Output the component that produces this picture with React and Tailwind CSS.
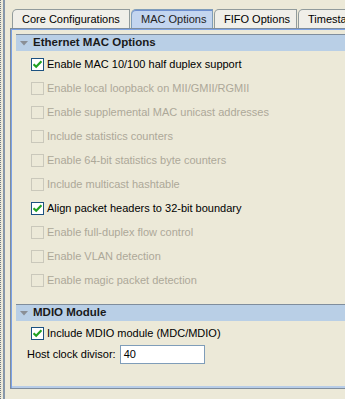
const font = { fontFamily: '"Liberation Sans", Arial, sans-serif' }

const macOptions = [
  { label: 'Enable MAC 10/100 half duplex support', checked: true },
  { label: 'Enable local loopback on MII/GMII/RGMII', disabled: true },
  { label: 'Enable supplemental MAC unicast addresses', disabled: true },
  { label: 'Include statistics counters', disabled: true },
  { label: 'Enable 64-bit statistics byte counters', disabled: true },
  { label: 'Include multicast hashtable', disabled: true },
  { label: 'Align packet headers to 32-bit boundary', checked: true },
  { label: 'Enable full-duplex flow control', disabled: true },
  { label: 'Enable VLAN detection', disabled: true },
  { label: 'Enable magic packet detection', disabled: true },
]

function Check({ checked, disabled }) {
  return (
    <span className={`w-[13px] h-[13px] shrink-0 border flex items-center justify-center ${disabled ? 'border-[#cac8bb] bg-[#ece9d8]' : 'border-[#1c5180] bg-white'}`}>
      {checked && (
        <svg width="9" height="9" viewBox="0 0 9 9">
          <path d="M0.5 4.2 L3.2 6.8 L8.5 1.3" fill="none" stroke="#21a121" strokeWidth="2.2" />
        </svg>
      )}
    </span>
  )
}

function Row({ label, checked, disabled }) {
  return (
    <div className="h-[24px] flex items-center gap-[3px] pl-[20px]">
      <Check checked={checked} disabled={disabled} />
      <span className={`text-[11px] leading-none ${disabled ? 'text-[#aca899]' : 'text-black'}`}>{label}</span>
    </div>
  )
}

function Header({ title }) {
  return (
    <div className="h-[17px] ml-[5px] bg-[#b9cfe6] border-t border-[#7f8d9c] flex items-center gap-[5px] pl-[4px]">
      <svg width="8" height="5" viewBox="0 0 8 5"><path d="M0 0 H8 L4 4.5 Z" fill="#8a8f96" /></svg>
      <span className="text-[11.5px] font-bold text-[#1a1a1a] leading-none">{title}</span>
    </div>
  )
}

function Tab({ label, active, w }) {
  return (
    <div
      className={`h-[19px] shrink-0 flex items-center pl-[9px] border border-b-0 rounded-tl-[5px] text-[11px] leading-none ${active ? 'bg-[#c3d5ef] border-[#7f9db9] text-[#222] shadow-[inset_0_1px_0_#6d8fd0]' : 'bg-[#f0efe9] border-[#919b9c] text-black'}`}
      style={{ width: w }}
    >
      {label}
    </div>
  )
}

export default function App() {
  return (
    <div className="w-[345px] h-[399px] bg-[#ece9d8] overflow-hidden flex" style={font}>
      <div className="w-[1px] h-full border-l border-dotted border-[#6f7a86]" />
      <div className="w-[2px] ml-[2px] h-full bg-[#8797aa]" />
      <div className="flex-1 flex flex-col ml-[5px] min-w-0">
        <div className="flex pt-[9px] pl-[2px] gap-[1px] shrink-0 whitespace-nowrap">
          <Tab label="Core Configurations" w={118} />
          <Tab label="MAC Options" active w={82} />
          <Tab label="FIFO Options" w={83} />
          <Tab label="Timestamp" w={80} />
        </div>
        <div className="h-[361px] w-[360px] border border-[#7f8d9c] shadow-[inset_1px_1px_0_#7ba2e7,inset_0_-2px_0_#b8cde8] pt-[5px]">
          <Header title="Ethernet MAC Options" />
          <div className="pt-[1px]">
            {macOptions.map((o) => <Row key={o.label} {...o} />)}
          </div>
          <div className="mt-[12px]">
            <Header title="MDIO Module" />
          </div>
          <Row label="Include MDIO module (MDC/MDIO)" checked />
          <div className="flex items-center pl-[16px] gap-[4px]">
            <span className="text-[11px] text-black">Host clock divisor:</span>
            <div className="w-[85px] h-[19px] bg-white border border-[#7f9db9] flex items-center pl-[3px] text-[11px]">40</div>
          </div>
        </div>
      </div>
    </div>
  )
}
